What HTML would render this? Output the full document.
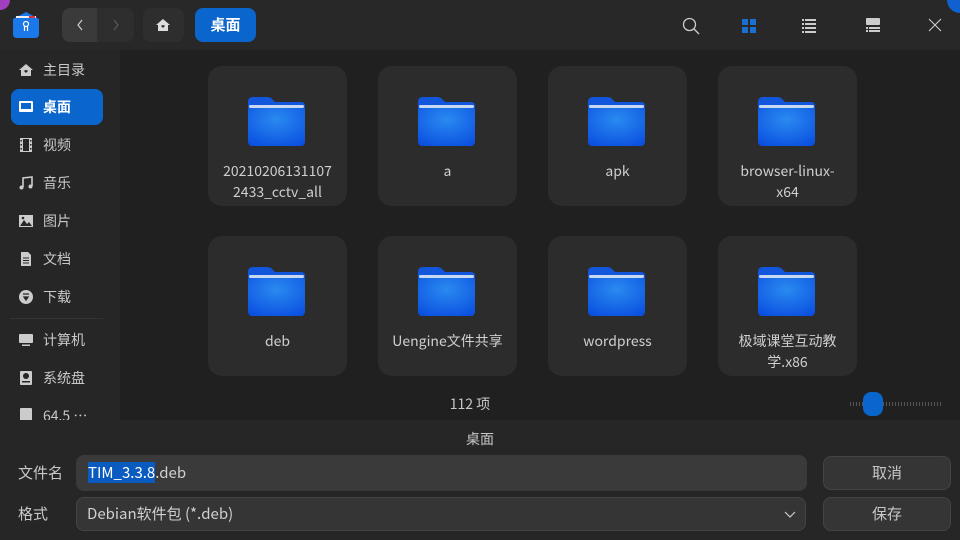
<!DOCTYPE html>
<html><head><meta charset="utf-8"><style>
*{margin:0;padding:0;box-sizing:border-box}
body{width:960px;height:540px;overflow:hidden;background:#202020;font-family:"Noto Sans CJK SC","Liberation Sans",sans-serif;color:#c8c8c8;position:relative;line-height:20px}
.a{position:absolute}
.card{position:absolute;width:139px;height:140px;background:#2c2c2c;border-radius:14px}
.fold{position:absolute;left:40px;top:31px;width:57px;height:49px}
.lbl{position:absolute;left:0;right:0;text-align:center;font-size:14px;line-height:21px;color:#cfcfcf}
.si{position:absolute;left:18px;width:16px;height:16px}
.st{position:absolute;left:43px;font-size:14px;color:#c8c8c8}
</style></head><body>
<div class="a" style="left:0;top:0;width:960px;height:50px;background:#282828"></div>
<div class="a" style="left:0;top:0;width:10px;height:10px;background:#a040c0;border-bottom-right-radius:10px"></div>
<div class="a" style="left:947px;top:0;width:13px;height:13px;background:#1060d0;border-bottom-left-radius:13px"></div>
<svg class="a" style="left:12px;top:9px" width="28" height="30" viewBox="0 0 28 30">
<path d="M1 10 L14 3 L27 10 L27 25 Q27 29 23 29 L5 29 Q1 29 1 25Z" fill="#1a78e8"/>
<rect x="4" y="7" width="20" height="2" fill="#f0f0f0"/><rect x="17" y="7" width="6" height="2" fill="#e03040"/>
<circle cx="14" cy="15" r="2.5" fill="none" stroke="#fff" stroke-width="1.2"/><path d="M12.5 17v5M15.5 17v5" stroke="#fff" stroke-width="1.2"/>
</svg>
<div class="a" style="left:62px;top:8px;width:72px;height:34px;background:#2e2e2e;border-radius:8px;overflow:hidden"><div style="width:35px;height:34px;background:#3a3a3a"></div></div>
<svg class="a" style="left:72px;top:17px" width="16" height="16"><path d="M10 3 L6 8 L10 13" fill="none" stroke="#cfcfcf" stroke-width="1.2"/></svg>
<svg class="a" style="left:108px;top:17px" width="16" height="16"><path d="M6 3 L10 8 L6 13" fill="none" stroke="#5a5a5a" stroke-width="1.2"/></svg>
<div class="a" style="left:143px;top:8px;width:41px;height:34px;background:#2e2e2e;border-radius:8px"></div>
<svg class="a" style="left:155px;top:17px" width="16" height="16"><path d="M8 2 L15 8 L13 8 L13 14 L3 14 L3 8 L1 8Z" fill="#dcdcdc"/><path d="M6 9 Q8 7 8 9 Q8 7 10 9 L8 11Z" fill="#333"/></svg>
<div class="a" style="left:195px;top:8px;width:61px;height:34px;background:#0a66cc;border-radius:8px;color:#fff;font-size:15px;text-align:center;line-height:34px;font-weight:bold">桌面</div>
<svg class="a" style="left:681px;top:16px" width="20" height="20"><circle cx="8.5" cy="8.5" r="6" fill="none" stroke="#ccc" stroke-width="1.3"/><path d="M13 13 L18 18" stroke="#ccc" stroke-width="1.3"/></svg>
<svg class="a" style="left:741px;top:18px" width="16" height="16"><rect x="1" y="1" width="6" height="6" fill="#1a6fd0"/><rect x="9" y="1" width="6" height="6" fill="#1a6fd0"/><rect x="1" y="9" width="6" height="6" fill="#1a6fd0"/><rect x="9" y="9" width="6" height="6" fill="#1a6fd0"/></svg>
<svg class="a" style="left:801px;top:18px" width="16" height="16" fill="#ccc"><rect x="1" y="1" width="2" height="2"/><rect x="4" y="1" width="11" height="2"/><rect x="1" y="5" width="2" height="2"/><rect x="4" y="5" width="11" height="2"/><rect x="1" y="9" width="2" height="2"/><rect x="4" y="9" width="11" height="2"/><rect x="1" y="13" width="2" height="2"/><rect x="4" y="13" width="11" height="2"/></svg>
<svg class="a" style="left:865px;top:17px" width="16" height="16" fill="#ccc"><rect x="1" y="1" width="14" height="7" rx="1"/><rect x="1" y="10" width="2" height="2"/><rect x="4" y="10" width="11" height="2"/><rect x="1" y="13" width="2" height="2"/><rect x="4" y="13" width="11" height="2"/></svg>
<svg class="a" style="left:928px;top:18px" width="14" height="14"><path d="M1 1L13 13M13 1L1 13" stroke="#ccc" stroke-width="1.1"/></svg>
<div class="a" style="left:0;top:50px;width:120px;height:370px;background:#262626"></div>
<div class="a" style="left:11px;top:89px;width:92px;height:36px;background:#0a66cc;border-radius:8px"></div>
<svg class="si" style="top:62px" viewBox="0 0 16 16"><path d="M8 2 L15 8 L13 8 L13 14 L3 14 L3 8 L1 8Z" fill="#ccc"/><path d="M6 9 Q8 7 8 9 Q8 7 10 9 L8 11Z" fill="#262626"/></svg><div class="st" style="top:60px">主目录</div>
<svg class="si" style="top:99px" viewBox="0 0 16 16"><rect x="1" y="2" width="14" height="11" rx="1" fill="#fff"/><rect x="3" y="4" width="10" height="6" fill="#0a66cc"/></svg><div class="st" style="top:97px;color:#fff;font-weight:bold">桌面</div>
<svg class="si" style="top:137px" viewBox="0 0 16 16"><rect x="2" y="1" width="12" height="14" fill="#ccc"/><g fill="#262626"><rect x="5" y="2" width="6" height="12"/><rect x="2.5" y="3" width="1.5" height="1.5"/><rect x="2.5" y="7" width="1.5" height="1.5"/><rect x="2.5" y="11" width="1.5" height="1.5"/><rect x="12" y="3" width="1.5" height="1.5"/><rect x="12" y="7" width="1.5" height="1.5"/><rect x="12" y="11" width="1.5" height="1.5"/></g></svg><div class="st" style="top:135px">视频</div>
<svg class="si" style="top:175px" viewBox="0 0 16 16"><path d="M5 12V3L14 2V11" fill="none" stroke="#ccc" stroke-width="1.6"/><circle cx="3.5" cy="12.5" r="2" fill="#ccc"/><circle cx="12.5" cy="11.5" r="2" fill="#ccc"/></svg><div class="st" style="top:173px">音乐</div>
<svg class="si" style="top:213px" viewBox="0 0 16 16"><rect x="1" y="2" width="14" height="12" fill="#ccc"/><path d="M2 13L6 7L9 11L11 9L14 13Z" fill="#262626"/><circle cx="5" cy="5" r="1.3" fill="#262626"/></svg><div class="st" style="top:211px">图片</div>
<svg class="si" style="top:251px" viewBox="0 0 16 16"><path d="M3 1H10L13 4V15H3Z" fill="#ccc"/><path d="M5 7H11M5 9.5H11M5 12H11" stroke="#262626"/></svg><div class="st" style="top:249px">文档</div>
<svg class="si" style="top:289px" viewBox="0 0 16 16"><circle cx="8" cy="8" r="7" fill="#ccc"/><path d="M5 5H11M6 8H10L8 11Z" stroke="#262626" fill="#262626" stroke-width="1.3"/></svg><div class="st" style="top:287px">下载</div>
<div class="a" style="left:10px;top:318px;width:93px;height:1px;background:#333"></div>
<svg class="si" style="top:332px" viewBox="0 0 16 16"><rect x="1" y="2" width="14" height="9" rx="1" fill="#ccc"/><rect x="4" y="12.5" width="8" height="1.5" fill="#ccc"/></svg><div class="st" style="top:330px">计算机</div>
<svg class="si" style="top:370px" viewBox="0 0 16 16"><rect x="2" y="1" width="12" height="14" rx="1" fill="#ccc"/><circle cx="8" cy="6" r="3" fill="#262626"/><rect x="4" y="11" width="8" height="1.5" fill="#262626"/></svg><div class="st" style="top:368px">系统盘</div>
<div class="a" style="left:0;top:400px;width:120px;height:20px;overflow:hidden"><svg class="si" style="top:8px" viewBox="0 0 16 16"><rect x="2" y="0" width="12" height="16" rx="1" fill="#ccc"/></svg><div class="st" style="top:6px">64.5 …</div></div>
<svg width="0" height="0" style="position:absolute"><defs>
<radialGradient id="g" cx="0.5" cy="0.3" r="0.8"><stop offset="0" stop-color="#2a8af0"/><stop offset="1" stop-color="#0a4fe0"/></radialGradient>
<symbol id="f" viewBox="0 0 57 49"><path d="M0 5Q0 0 5 0H19Q23 0 25 3L27 5H53Q57 5 57 9V44Q57 49 52 49H5Q0 49 0 44Z" fill="#1256dc"/><rect x="1" y="8" width="55" height="3" rx="1.5" fill="#c8d8f0"/><path d="M0 14Q0 11 3 11H54Q57 11 57 14V44Q57 49 52 49H5Q0 49 0 44Z" fill="url(#g)"/></symbol></defs></svg>
<div class="card" style="left:208px;top:66px"><svg class="fold"><use href="#f"/></svg><div class="lbl" style="top:95px">20210206131107<br>2433_cctv_all</div></div>
<div class="card" style="left:378px;top:66px"><svg class="fold"><use href="#f"/></svg><div class="lbl" style="top:95px">a</div></div>
<div class="card" style="left:548px;top:66px"><svg class="fold"><use href="#f"/></svg><div class="lbl" style="top:95px">apk</div></div>
<div class="card" style="left:718px;top:66px"><svg class="fold"><use href="#f"/></svg><div class="lbl" style="top:95px">browser-linux-<br>x64</div></div>
<div class="card" style="left:208px;top:236px"><svg class="fold"><use href="#f"/></svg><div class="lbl" style="top:95px">deb</div></div>
<div class="card" style="left:378px;top:236px"><svg class="fold"><use href="#f"/></svg><div class="lbl" style="top:95px">Uengine文件共享</div></div>
<div class="card" style="left:548px;top:236px"><svg class="fold"><use href="#f"/></svg><div class="lbl" style="top:95px">wordpress</div></div>
<div class="card" style="left:718px;top:236px"><svg class="fold"><use href="#f"/></svg><div class="lbl" style="top:95px">极域课堂互动教<br>学.x86</div></div>
<div class="a" style="left:420px;top:394px;width:100px;text-align:center;font-size:14px">112 项</div>
<div class="a" style="left:850px;top:402px;width:91px;height:4px;background:repeating-linear-gradient(90deg,#555 0 1px,transparent 1px 3px)"></div>
<div class="a" style="left:863px;top:392px;width:20px;height:24px;background:#0a66cc;border-radius:8px"></div>
<div class="a" style="left:0;top:420px;width:960px;height:120px;background:#262626"></div>
<div class="a" style="left:440px;top:429px;width:80px;text-align:center;font-size:14px">桌面</div>
<div class="a" style="left:18px;top:463px;font-size:15px">文件名</div>
<div class="a" style="left:76px;top:455px;width:731px;height:36px;background:#3a3a3a;border-radius:8px"></div>
<div class="a" style="left:88px;top:463px;font-size:15px;color:#d0d0d0"><span style="background:#0a5bc0;color:#fff">TIM_3.3.8</span>.deb</div>
<div class="a" style="left:18px;top:504px;font-size:15px">格式</div>
<div class="a" style="left:76px;top:497px;width:730px;height:34px;background:#353535;border:1px solid #444;border-radius:8px"></div>
<div class="a" style="left:87px;top:504px;font-size:15px;color:#d0d0d0">Debian软件包 (*.deb)</div>
<svg class="a" style="left:783px;top:507px" width="14" height="14"><path d="M2 5L7 10L12 5" fill="none" stroke="#ccc" stroke-width="1.2"/></svg>
<div class="a" style="left:823px;top:456px;width:128px;height:34px;background:#353535;border:1px solid #444;border-radius:8px;text-align:center;line-height:32px;font-size:15px">取消</div>
<div class="a" style="left:823px;top:497px;width:128px;height:34px;background:#353535;border:1px solid #444;border-radius:8px;text-align:center;line-height:32px;font-size:15px">保存</div>
</body></html>
